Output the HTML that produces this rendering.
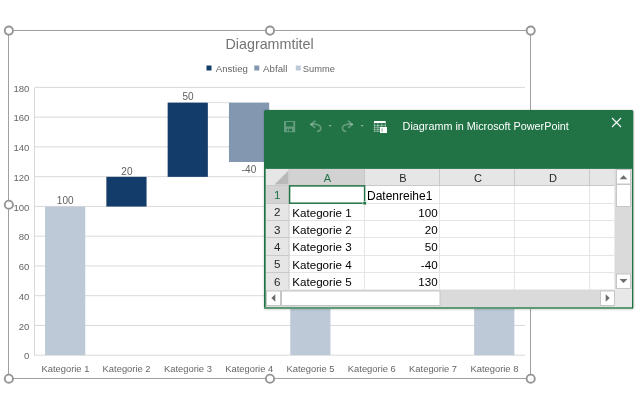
<!DOCTYPE html><html><head><meta charset="utf-8"><style>html,body{margin:0;padding:0;background:#fff;overflow:hidden}svg{display:block;will-change:transform}text{font-family:"Liberation Sans",sans-serif}</style></head><body><svg width="640" height="406" viewBox="0 0 640 406"><line x1="34.5" y1="355.2" x2="525" y2="355.2" stroke="#d9d9d9" stroke-width="1"/><text x="29.4" y="359.4" font-size="9.6" fill="#666666" text-anchor="end">0</text><line x1="34.5" y1="325.44" x2="525" y2="325.44" stroke="#d9d9d9" stroke-width="1"/><text x="29.4" y="329.6" font-size="9.6" fill="#666666" text-anchor="end">20</text><line x1="34.5" y1="295.69" x2="525" y2="295.69" stroke="#d9d9d9" stroke-width="1"/><text x="29.4" y="299.9" font-size="9.6" fill="#666666" text-anchor="end">40</text><line x1="34.5" y1="265.93" x2="525" y2="265.93" stroke="#d9d9d9" stroke-width="1"/><text x="29.4" y="270.1" font-size="9.6" fill="#666666" text-anchor="end">60</text><line x1="34.5" y1="236.18" x2="525" y2="236.18" stroke="#d9d9d9" stroke-width="1"/><text x="29.4" y="240.4" font-size="9.6" fill="#666666" text-anchor="end">80</text><line x1="34.5" y1="206.42" x2="525" y2="206.42" stroke="#d9d9d9" stroke-width="1"/><text x="29.4" y="210.6" font-size="9.6" fill="#666666" text-anchor="end">100</text><line x1="34.5" y1="176.66" x2="525" y2="176.66" stroke="#d9d9d9" stroke-width="1"/><text x="29.4" y="180.9" font-size="9.6" fill="#666666" text-anchor="end">120</text><line x1="34.5" y1="146.91" x2="525" y2="146.91" stroke="#d9d9d9" stroke-width="1"/><text x="29.4" y="151.1" font-size="9.6" fill="#666666" text-anchor="end">140</text><line x1="34.5" y1="117.15" x2="525" y2="117.15" stroke="#d9d9d9" stroke-width="1"/><text x="29.4" y="121.4" font-size="9.6" fill="#666666" text-anchor="end">160</text><line x1="34.5" y1="87.4" x2="525" y2="87.4" stroke="#d9d9d9" stroke-width="1"/><text x="29.4" y="91.6" font-size="9.6" fill="#666666" text-anchor="end">180</text><line x1="34.5" y1="87.5" x2="34.5" y2="355.5" stroke="#d9d9d9" stroke-width="1"/><rect x="45.05" y="206.55" width="40.2" height="148.55" fill="#bdc9d7"/><text x="65.4" y="371.8" font-size="9.4" fill="#666666" text-anchor="middle">Kategorie 1</text><rect x="106.35" y="176.84" width="40.2" height="29.71" fill="#143c6b"/><text x="126.6" y="371.8" font-size="9.4" fill="#666666" text-anchor="middle">Kategorie 2</text><rect x="167.65" y="102.57" width="40.2" height="74.28" fill="#143c6b"/><text x="187.9" y="371.8" font-size="9.4" fill="#666666" text-anchor="middle">Kategorie 3</text><rect x="228.95" y="102.57" width="40.2" height="59.42" fill="#8497b0"/><text x="249.2" y="371.8" font-size="9.4" fill="#666666" text-anchor="middle">Kategorie 4</text><rect x="290.25" y="161.99" width="40.2" height="193.12" fill="#bdc9d7"/><text x="310.5" y="371.8" font-size="9.4" fill="#666666" text-anchor="middle">Kategorie 5</text><rect x="351.55" y="132.28" width="40.2" height="29.71" fill="#143c6b"/><text x="371.8" y="371.8" font-size="9.4" fill="#666666" text-anchor="middle">Kategorie 6</text><rect x="412.85" y="132.28" width="40.2" height="14.86" fill="#8497b0"/><text x="433.1" y="371.8" font-size="9.4" fill="#666666" text-anchor="middle">Kategorie 7</text><rect x="474.15" y="147.13" width="40.2" height="207.97" fill="#bdc9d7"/><text x="494.4" y="371.8" font-size="9.4" fill="#666666" text-anchor="middle">Kategorie 8</text><line x1="207.75" y1="102.57" x2="229.05" y2="102.57" stroke="#e0e0e0" stroke-width="1"/><text x="65.2" y="204.2" font-size="10" fill="#606060" text-anchor="middle">100</text><text x="126.9" y="174.5" font-size="10" fill="#606060" text-anchor="middle">20</text><text x="188.1" y="100.1" font-size="10" fill="#606060" text-anchor="middle">50</text><text x="249.0" y="172.6" font-size="10" fill="#606060" text-anchor="middle">-40</text><text x="269.6" y="49.4" font-size="14.3" fill="#747474" text-anchor="middle">Diagrammtitel</text><rect x="206.5" y="65.5" width="5" height="5" fill="#143c6b"/><text x="215.8" y="71.7" font-size="9.6" fill="#666666">Anstieg</text><rect x="254.3" y="65.5" width="5" height="5" fill="#8497b0"/><text x="263.1" y="71.7" font-size="9.7" fill="#666666">Abfall</text><rect x="295.8" y="65.5" width="5" height="5" fill="#bdc9d7"/><text x="302.8" y="71.7" font-size="9.3" fill="#666666">Summe</text><rect x="8.5" y="30.5" width="522" height="348" fill="none" stroke="#a0a0a0" stroke-width="1"/><circle cx="8.85" cy="30.6" r="4.1" fill="#fff" stroke="#959595" stroke-width="1.9"/><circle cx="270" cy="30.6" r="4.1" fill="#fff" stroke="#959595" stroke-width="1.9"/><circle cx="530.7" cy="30.6" r="4.1" fill="#fff" stroke="#959595" stroke-width="1.9"/><circle cx="8.85" cy="204.7" r="4.1" fill="#fff" stroke="#959595" stroke-width="1.9"/><circle cx="530.7" cy="204.6" r="4.1" fill="#fff" stroke="#959595" stroke-width="1.9"/><circle cx="8.85" cy="378.7" r="4.1" fill="#fff" stroke="#959595" stroke-width="1.9"/><circle cx="270" cy="378.7" r="4.1" fill="#fff" stroke="#959595" stroke-width="1.9"/><circle cx="530.7" cy="378.7" r="4.1" fill="#fff" stroke="#959595" stroke-width="1.9"/><defs><filter id="sh" x="-5%" y="-5%" width="110%" height="110%"><feGaussianBlur stdDeviation="1.3"/></filter></defs><rect x="264" y="110" width="369.8" height="199.5" rx="1.5" fill="#000" opacity="0.2" filter="url(#sh)"/><rect x="264" y="110" width="369.3" height="199" rx="1.5" fill="#217346"/><rect x="265" y="168.9" width="367" height="138.1" fill="#fff"/><rect x="265" y="169" width="350" height="16.6" fill="#e6e6e6"/><rect x="289" y="169" width="76" height="16.6" fill="#d2d2d2"/><rect x="265" y="185" width="24.3" height="104.5" fill="#e6e6e6"/><rect x="265" y="185" width="24.3" height="18.2" fill="#d2d2d2"/><polygon points="274.5,184.4 288.5,184.4 288.5,170.5" fill="#b9b9b9"/><line x1="364.5" y1="186" x2="364.5" y2="289" stroke="#e5e5e5"/><line x1="364.5" y1="169" x2="364.5" y2="185.5" stroke="#c9c9c9"/><line x1="439.5" y1="186" x2="439.5" y2="289" stroke="#e5e5e5"/><line x1="439.5" y1="169" x2="439.5" y2="185.5" stroke="#c9c9c9"/><line x1="514.5" y1="186" x2="514.5" y2="289" stroke="#e5e5e5"/><line x1="514.5" y1="169" x2="514.5" y2="185.5" stroke="#c9c9c9"/><line x1="589.5" y1="186" x2="589.5" y2="289" stroke="#e5e5e5"/><line x1="589.5" y1="169" x2="589.5" y2="185.5" stroke="#c9c9c9"/><line x1="289" y1="203.50" x2="614.5" y2="203.50" stroke="#e5e5e5"/><line x1="265" y1="203.50" x2="289" y2="203.50" stroke="#c9c9c9"/><line x1="289" y1="220.50" x2="614.5" y2="220.50" stroke="#e5e5e5"/><line x1="265" y1="220.50" x2="289" y2="220.50" stroke="#c9c9c9"/><line x1="289" y1="237.50" x2="614.5" y2="237.50" stroke="#e5e5e5"/><line x1="265" y1="237.50" x2="289" y2="237.50" stroke="#c9c9c9"/><line x1="289" y1="255.50" x2="614.5" y2="255.50" stroke="#e5e5e5"/><line x1="265" y1="255.50" x2="289" y2="255.50" stroke="#c9c9c9"/><line x1="289" y1="272.50" x2="614.5" y2="272.50" stroke="#e5e5e5"/><line x1="265" y1="272.50" x2="289" y2="272.50" stroke="#c9c9c9"/><line x1="265" y1="185.5" x2="614.5" y2="185.5" stroke="#c9c9c9"/><line x1="289" y1="169" x2="289" y2="289" stroke="#c9c9c9"/><text x="327.5" y="182" font-size="11" fill="#217346" text-anchor="middle">A</text><text x="403.0" y="182" font-size="11" fill="#262626" text-anchor="middle">B</text><text x="478.0" y="182" font-size="11" fill="#262626" text-anchor="middle">C</text><text x="553.0" y="182" font-size="11" fill="#262626" text-anchor="middle">D</text><text x="277.3" y="199.0" font-size="11.6" fill="#217346" text-anchor="middle">1</text><text x="277.3" y="216.3" font-size="11.6" fill="#262626" text-anchor="middle">2</text><text x="277.3" y="233.7" font-size="11.6" fill="#262626" text-anchor="middle">3</text><text x="277.3" y="251.0" font-size="11.6" fill="#262626" text-anchor="middle">4</text><text x="277.3" y="268.3" font-size="11.6" fill="#262626" text-anchor="middle">5</text><text x="277.3" y="285.6" font-size="11.6" fill="#262626" text-anchor="middle">6</text><text x="367" y="199.8" font-size="12" fill="#000">Datenreihe1</text><text x="292.3" y="216.5" font-size="11.6" fill="#000">Kategorie 1</text><text x="437.6" y="216.5" font-size="11.6" fill="#000" text-anchor="end">100</text><text x="292.3" y="233.9" font-size="11.6" fill="#000">Kategorie 2</text><text x="437.6" y="233.9" font-size="11.6" fill="#000" text-anchor="end">20</text><text x="292.3" y="251.2" font-size="11.6" fill="#000">Kategorie 3</text><text x="437.6" y="251.2" font-size="11.6" fill="#000" text-anchor="end">50</text><text x="292.3" y="268.5" font-size="11.6" fill="#000">Kategorie 4</text><text x="437.6" y="268.5" font-size="11.6" fill="#000" text-anchor="end">-40</text><text x="292.3" y="285.9" font-size="11.6" fill="#000">Kategorie 5</text><text x="437.6" y="285.9" font-size="11.6" fill="#000" text-anchor="end">130</text><rect x="289.6" y="185.9" width="75" height="17.3" fill="none" stroke="#217346" stroke-width="1.5"/><rect x="362.9" y="201.5" width="3.4" height="3.4" fill="#217346" stroke="#fff" stroke-width="0.6"/><rect x="614.5" y="169" width="17.5" height="120.5" fill="#dadada"/><rect x="616.5" y="169.5" width="14" height="14.5" fill="#fff" stroke="#c6c6c6" stroke-width="1"/><polygon points="619.6,179.3 627.4,179.3 623.5,175.3" fill="#6d6d6d"/><rect x="616.5" y="184.5" width="14" height="22" fill="#fff" stroke="#c6c6c6" stroke-width="1"/><rect x="616.5" y="274" width="14" height="14.5" fill="#fff" stroke="#c6c6c6" stroke-width="1"/><polygon points="619.6,279 627.4,279 623.5,283" fill="#6d6d6d"/><rect x="265" y="289.5" width="349.5" height="17.5" fill="#dadada"/><rect x="614.5" y="289.5" width="17.5" height="17.5" fill="#e8e8e8"/><rect x="266.5" y="291" width="14" height="14.5" fill="#fff" stroke="#c6c6c6" stroke-width="1"/><polygon points="275.3,294.2 275.3,301.8 271.3,298" fill="#6d6d6d"/><rect x="281.5" y="291" width="158.5" height="14.5" fill="#fff" stroke="#c6c6c6" stroke-width="1"/><rect x="600.5" y="291" width="14" height="14.5" fill="#fff" stroke="#c6c6c6" stroke-width="1"/><polygon points="605.7,294.2 605.7,301.8 609.7,298" fill="#6d6d6d"/><path d="M265.5 168.9 V307.5 H632" fill="none" stroke="#5a9a76" stroke-width="1"/><path d="M264.5 307 V308.5 H632.5" fill="none" stroke="#5e9c79" stroke-width="1"/><path fill-rule="evenodd" fill="rgba(255,255,255,0.30)" d="M284 121 H295.2 V132.2 H284 Z M286.1 122 H293.3 V126.6 H286.1 Z M287 128.7 H288.2 V131.2 H287 Z M289.1 128.7 H292 V131.2 H289.1 Z"/><g fill="none" stroke="rgba(255,255,255,0.30)" stroke-width="1.6" stroke-linecap="round"><path d="M311 124.4 C 316 123.4, 320.8 125, 320.8 128 C 320.8 130, 319.2 131.2, 317.6 131.4"/><path d="M314.9 121.2 L311 124.4 L314.6 127.4"/></g><path d="M328.4 125.1 H331.8 L330.1 127 Z" fill="rgba(255,255,255,0.4)"/><g fill="none" stroke="rgba(255,255,255,0.30)" stroke-width="1.6" stroke-linecap="round" transform="translate(663.25 0) scale(-1 1)"><path d="M311 124.4 C 316 123.4, 320.8 125, 320.8 128 C 320.8 130, 319.2 131.2, 317.6 131.4"/><path d="M314.9 121.2 L311 124.4 L314.6 127.4"/></g><path d="M360.4 125.1 H363.8 L362.1 127 Z" fill="rgba(255,255,255,0.4)"/><rect x="374" y="121" width="11.7" height="2" fill="#fff"/><g stroke="rgba(255,255,255,0.65)" stroke-width="0.65" fill="none"><path d="M374.35 123 V131.6 M377.9 123 V131.6 M381.8 123 V127 M385.35 123 V127 M374 125.4 H385.7 M374 127.3 H380 M374 129.3 H380 M374 131.3 H380"/></g><rect x="380" y="127" width="7" height="6" fill="#fff"/><rect x="381.3" y="128.3" width="1.6" height="3.4" fill="#a8cbb4"/><text x="402.6" y="130.1" font-size="10.8" fill="#fff">Diagramm in Microsoft PowerPoint</text><path d="M612 118 L621 127 M621 118 L612 127" stroke="#fff" stroke-width="1.1"/></svg></body></html>
